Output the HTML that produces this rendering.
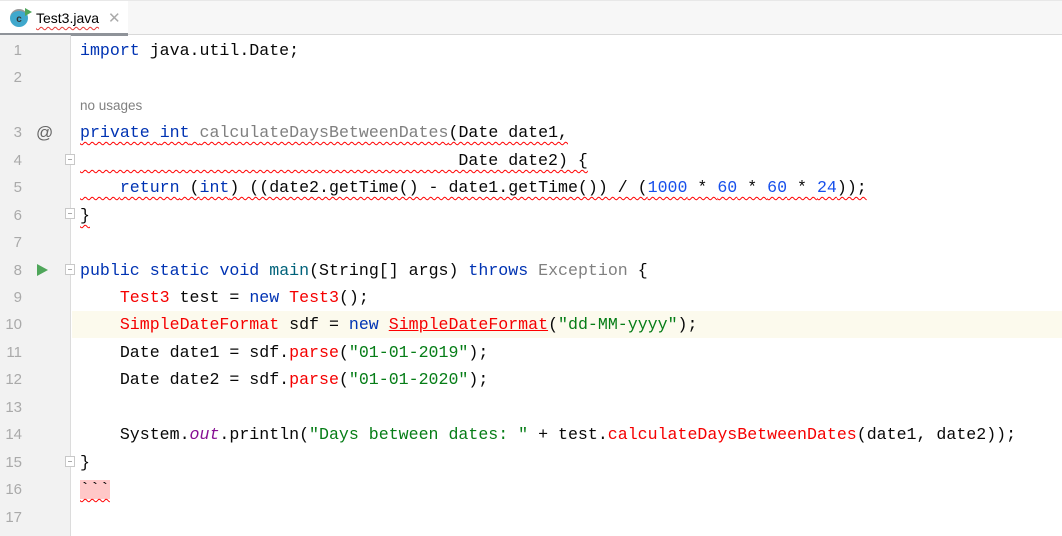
<!DOCTYPE html>
<html><head><meta charset="utf-8"><style>
*{margin:0;padding:0;box-sizing:border-box}
body{width:1062px;height:536px;background:#fff;position:relative;overflow:hidden;font-family:"Liberation Mono",monospace}
.tabbar{position:absolute;left:0;top:0;width:1062px;height:35px;background:#f7f7f7;border-bottom:1px solid #d9d9d9;border-top:1px solid #e8e8e8}
.tab{position:absolute;left:0;top:0;width:128px;height:35px;background:#fff;border-bottom:3px solid #8f9399}
.tab .ic{position:absolute;left:10px;top:8px;width:18px;height:18px;border-radius:50%;background:#40a8cc;color:#333;font:bold 10px "Liberation Sans",sans-serif;text-align:center;line-height:18px;border-top:2px solid #999}
.tab .ic:after{content:"";position:absolute;right:-4px;top:-3px;border-left:7px solid #4fa65a;border-top:4px solid transparent;border-bottom:4px solid transparent}
.tab .t{position:absolute;left:36px;top:9px;font:14px "Liberation Sans",sans-serif;color:#000;text-decoration:underline wavy #e53935;text-decoration-thickness:1px;text-underline-offset:3px}
.tab .x{position:absolute;left:108px;top:8px;font:15px "Liberation Sans",sans-serif;color:#aaa}
.gutter{position:absolute;left:0;top:35px;width:71px;height:501px;background:#f2f2f2;border-right:1px solid #dcdcdc}
.ln{position:absolute;left:0;width:22px;text-align:right;font:15px "Liberation Sans",sans-serif;color:#aaa;height:27px;line-height:27px}
.code{position:absolute;left:80px;font-size:16.6px;line-height:27px;height:27px;white-space:pre;color:#080808}
.k{color:#0033b3}.s{color:#067d17}.n{color:#1750eb}.r{color:#f50000}.g{color:#808080}.o{color:#871094;font-style:italic}
.w{text-decoration:underline wavy #f00;text-decoration-thickness:1px;text-underline-offset:4px}
.u{text-decoration:underline;text-decoration-color:#f00}
.hl{position:absolute;left:72px;top:311px;width:990px;height:27px;background:#fcfaed}
.fold{position:absolute;left:65px;width:10px;height:11px;border:1px solid #c8c8c8;background:#fff}
.fold:after{content:"";position:absolute;left:2px;top:4px;width:4px;height:1px;background:#aaa}
</style></head><body>
<div class="tabbar"><div class="tab"><div class="ic">c</div><div class="t">Test3.java</div><div class="x">✕</div></div></div>
<div class="gutter"></div>
<div class="hl"></div>
<div class="ln" style="top:37px">1</div>
<div class="ln" style="top:64px">2</div>
<div class="ln" style="top:119px">3</div>
<div class="ln" style="top:147px">4</div>
<div class="ln" style="top:174px">5</div>
<div class="ln" style="top:202px">6</div>
<div class="ln" style="top:229px">7</div>
<div class="ln" style="top:257px">8</div>
<div class="ln" style="top:284px">9</div>
<div class="ln" style="top:311px">10</div>
<div class="ln" style="top:339px">11</div>
<div class="ln" style="top:366px">12</div>
<div class="ln" style="top:394px">13</div>
<div class="ln" style="top:421px">14</div>
<div class="ln" style="top:449px">15</div>
<div class="ln" style="top:476px">16</div>
<div class="ln" style="top:504px">17</div>
<div style="position:absolute;left:36px;top:119px;font:17px 'Liberation Sans',sans-serif;color:#666;line-height:27px">@</div>
<div style="position:absolute;left:37px;top:264px;border-left:11px solid #4fa65a;border-top:6px solid transparent;border-bottom:6px solid transparent"></div>
<div class="fold" style="top:154px"></div>
<div class="fold" style="top:208px"></div>
<div class="fold" style="top:264px"></div>
<div class="fold" style="top:456px"></div>
<div class="code" style="top:37px"><span class="k">import</span> java.util.Date;</div>
<div style="position:absolute;left:80px;top:92px;font:13.5px 'Liberation Sans',sans-serif;color:#808080;line-height:27px">no usages</div>
<div class="code" style="top:119px"><span class="w"><span class="k">private</span> <span class="k">int</span> <span class="g">calculateDaysBetweenDates</span>(Date date1,</span></div>
<div class="code" style="top:147px"><span class="w">                                      Date date2) {</span></div>
<div class="code" style="top:174px"><span class="w">    <span class="k">return</span> (<span class="k">int</span>) ((date2.getTime() - date1.getTime()) / (<span class="n">1000</span> * <span class="n">60</span> * <span class="n">60</span> * <span class="n">24</span>));</span></div>
<div class="code" style="top:202px"><span class="w">}</span></div>
<div class="code" style="top:257px"><span class="k">public</span> <span class="k">static</span> <span class="k">void</span> <span style="color:#00627a">main</span>(String[] args) <span class="k">throws</span> <span class="g">Exception</span> {</div>
<div class="code" style="top:284px">    <span class="r">Test3</span> test = <span class="k">new</span> <span class="r">Test3</span>();</div>
<div class="code" style="top:311px">    <span class="r">SimpleDateFormat</span> sdf = <span class="k">new</span> <span class="r u">SimpleDateFormat</span>(<span class="s">"dd-MM-yyyy"</span>);</div>
<div class="code" style="top:339px">    Date date1 = sdf.<span class="r">parse</span>(<span class="s">"01-01-2019"</span>);</div>
<div class="code" style="top:366px">    Date date2 = sdf.<span class="r">parse</span>(<span class="s">"01-01-2020"</span>);</div>
<div class="code" style="top:421px">    System.<span class="o">out</span>.println(<span class="s">"Days between dates: "</span> + test.<span class="r">calculateDaysBetweenDates</span>(date1, date2));</div>
<div class="code" style="top:449px">}</div>
<div class="code" style="top:476px"><span class="w" style="background:#ffc8c8">&#96;&#96;&#96;</span></div>
</body></html>
